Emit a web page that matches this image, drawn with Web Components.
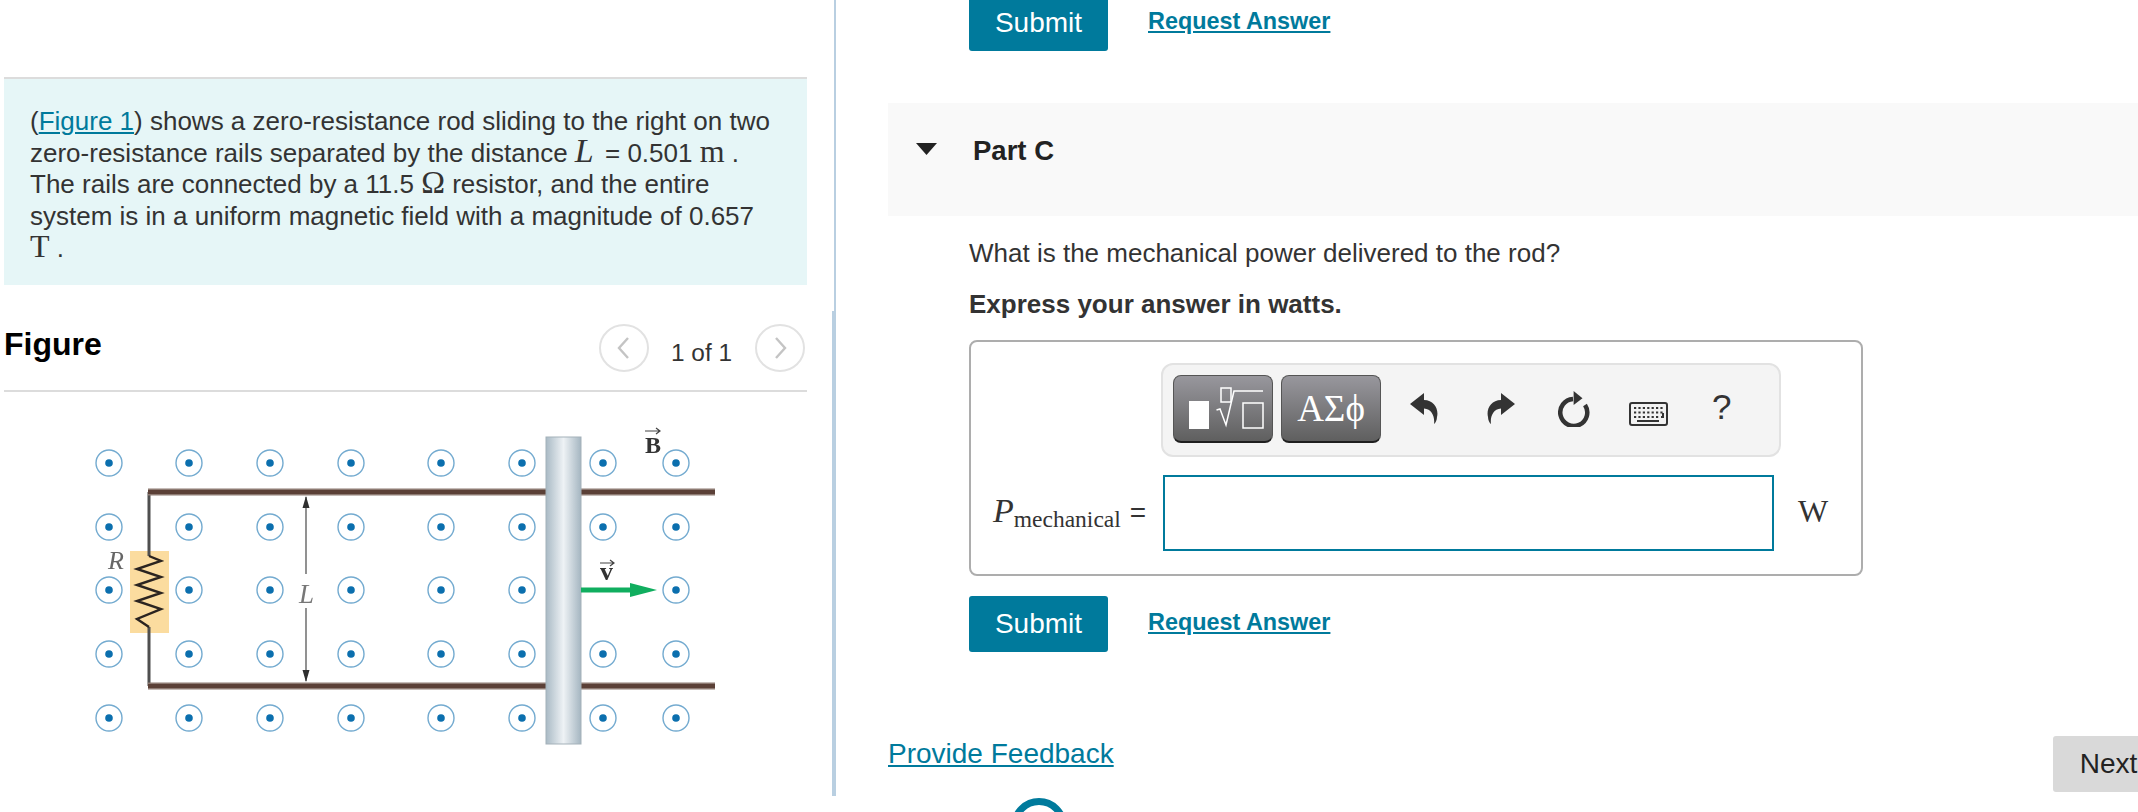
<!DOCTYPE html>
<html>
<head>
<meta charset="utf-8">
<title>Part C</title>
<style>
  html, body { margin: 0; padding: 0; background: #fff; overflow: hidden; }
  body { width: 2138px; height: 812px; font-family: "Liberation Sans", Arial, sans-serif; color: #333; }
</style>
</head>
<body>
<item-page>
  <problem-intro slot="left"></problem-intro>
  <figure-panel slot="left"></figure-panel>

  <answer-actions slot="right" clipped></answer-actions>
  <part-header slot="right" label="Part C"></part-header>
  <part-prompt slot="right">
    What is the mechanical power delivered to the rod?
    <b slot="hint">Express your answer in watts.</b>
  </part-prompt>
  <answer-box slot="right"></answer-box>
  <answer-actions slot="right"></answer-actions>
  <feedback-bar slot="right"></feedback-bar>
</item-page>

<script>
class ItemPage extends HTMLElement {
    constructor() {
        super();
        this.attachShadow({ mode: 'open' });
    }

    connectedCallback() {
        this.shadowRoot.innerHTML = `
            <style>
                :host {
                    display: flex;
                    position: relative;
                    width: 2138px;
                    height: 812px;
                    overflow: hidden;
                }
                .left {
                    width: 803px;
                    flex: none;
                    margin-left: 4px;
                    margin-right: 25px;
                    padding-top: 77px;
                }
                /* thin above the figure header, twice as wide below it */
                .rule {
                    width: 4px;
                    height: 796px;
                    flex: none;
                    background:
                        linear-gradient(#b9cfe1, #b9cfe1) right top / 2px 100% no-repeat,
                        linear-gradient(#b9cfe1, #b9cfe1) left 311px / 2px 100% no-repeat;
                }
                .right {
                    width: 1250px;
                    flex: none;
                    margin-left: 52px;
                    display: flex;
                    flex-direction: column;
                }
                .help {
                    position: absolute;
                    left: 1011px;
                    top: 798px;
                    width: 42px;
                    height: 42px;
                    border: 7px solid #007a9c;
                    border-radius: 50%;
                    background: #fff;
                }
            </style>
            <div class="left"><slot name="left"></slot></div>
            <div class="rule"></div>
            <div class="right"><slot name="right"></slot></div>
            <div class="help"></div>
        `;
    }
}

class ProblemIntro extends HTMLElement {
    constructor() {
        super();
        this.attachShadow({ mode: 'open' });
    }

    connectedCallback() {
        this.shadowRoot.innerHTML = `
            <style>
                :host {
                    display: block;
                    box-sizing: border-box;
                    height: 208px;
                    padding: 27px 0 0 26px;
                    background: #e6f6f7;
                    border-top: 2px solid #dcdcdc;
                    font-size: 26px;
                    line-height: 31.7px;
                    color: #333;
                    white-space: nowrap;
                }
                a { color: #007a9c; text-decoration: underline; }
                .m { font-family: "Liberation Serif", serif; font-size: 32px; line-height: 20px; }
                .i { font-style: italic; font-size: 34px; margin-right: 4px; }
            </style>
            (<a>Figure 1</a>) shows a zero-resistance rod sliding to the right on two<br>
            zero-resistance rails separated by the distance <span class="m i">L</span> = 0.501 <span class="m">m</span> .<br>
            The rails are connected by a 11.5 <span class="m">Ω</span> resistor, and the entire<br>
            system is in a uniform magnetic field with a magnitude of 0.657<br>
            <span class="m">T</span> .
        `;
    }
}

class FigurePanel extends HTMLElement {
    constructor() {
        super();
        this.attachShadow({ mode: 'open' });
    }

    connectedCallback() {
        // field markers, the spot behind the velocity arrow stays empty
        const cols = [109, 189, 270, 351, 441, 522, 603, 676];
        const rows = [463, 527, 590, 654, 718];
        let dots = '';
        for (const y of rows) {
            for (const x of cols) {
                if (x === 603 && y === 590) continue;
                dots += `<circle cx="${x}" cy="${y}" r="13" fill="#fff" stroke="#74abd0" stroke-width="1.4"/>`;
                dots += `<circle cx="${x}" cy="${y}" r="3.8" fill="#0b6fae"/>`;
            }
        }

        this.shadowRoot.innerHTML = `
            <style>
                :host { display: block; margin-top: 39px; }
                header {
                    display: flex;
                    height: 66px;
                    border-bottom: 2px solid #dcdcdc;
                }
                h2 {
                    margin: 1px 0 0 0;
                    font-size: 32px;
                    line-height: 38px;
                    font-weight: bold;
                    color: #000;
                    flex: 1;
                }
                .pager {
                    display: flex;
                    align-items: flex-start;
                    margin-right: 2px;
                }
                .pager span {
                    font-size: 24.4px;
                    line-height: 30px;
                    margin: 14px 23px 0 22px;
                    color: #333;
                }
                .pager svg { display: block; }
                .fig { display: block; filter: blur(0.55px); }
                text { font-family: "Liberation Serif", serif; }
            </style>
            <header>
                <h2>Figure</h2>
                <div class="pager">
                    <svg width="50" height="48" viewBox="0 0 50 48">
                        <ellipse cx="25" cy="24" rx="24" ry="23" fill="#fff" stroke="#e2e2e2" stroke-width="2"/>
                        <path d="M29 14 L20 24 L29 34" fill="none" stroke="#c4c4c4" stroke-width="2.4"/>
                    </svg>
                    <span>1 of 1</span>
                    <svg width="50" height="48" viewBox="0 0 50 48">
                        <ellipse cx="25" cy="24" rx="24" ry="23" fill="#fff" stroke="#e2e2e2" stroke-width="2"/>
                        <path d="M21 14 L30 24 L21 34" fill="none" stroke="#c4c4c4" stroke-width="2.4"/>
                    </svg>
                </div>
            </header>
            <svg class="fig" width="803" height="360" viewBox="4 392 803 360">
                <defs>
                    <linearGradient id="rod" x1="0" x2="1" y1="0" y2="0">
                        <stop offset="0" stop-color="#a9bac5"/>
                        <stop offset="0.5" stop-color="#eef2f5"/>
                        <stop offset="1" stop-color="#a5b6c1"/>
                    </linearGradient>
                </defs>
                ${dots}
                <rect x="130" y="551" width="39" height="82" fill="#fbdc9f"/>
                <path d="M149 492 V556 M149 627 V686" fill="none" stroke="#4f4f4f" stroke-width="3"/>
                <path d="M149 556 L161 561 L137 569 L161 577 L137 585 L161 593 L137 601 L161 609 L137 619 L149 627" fill="none" stroke="#2b2420" stroke-width="2.4"/>
                <rect x="148" y="488.5" width="567" height="7" fill="#8d7a72"/>
                <rect x="148" y="490" width="567" height="4" fill="#5b4037"/>
                <rect x="148" y="682.5" width="567" height="7" fill="#8d7a72"/>
                <rect x="148" y="684" width="567" height="4" fill="#5b4037"/>
                <path d="M306 497 V574 M306 608 V681" fill="none" stroke="#777" stroke-width="1.6"/>
                <path d="M306 496 L302.5 508 H309.5 Z M306 682 L302.5 670 H309.5 Z" fill="#2f2f2f"/>
                <text x="299" y="603" font-size="27" font-style="italic" fill="#777">L</text>
                <text x="108" y="569" font-size="26" font-style="italic" fill="#666">R</text>
                <rect x="546" y="437" width="35" height="307" fill="url(#rod)" stroke="#a4b1b9" stroke-width="1"/>
                <path d="M581 590 H632" stroke="#10ae5f" stroke-width="5"/>
                <path d="M630 583 L657 590 L630 597 Z" fill="#10ae5f"/>
                <text x="600" y="580" font-size="26" font-weight="bold" fill="#333">v</text>
                <path d="M600 563 H614 M610 560 L614 563 L610 566" fill="none" stroke="#444" stroke-width="1.2"/>
                <text x="645" y="453" font-size="24" font-weight="bold" fill="#333">B</text>
                <path d="M645 431 H660 M656 428 L660 431 L656 434" fill="none" stroke="#444" stroke-width="1.2"/>
            </svg>
        `;
    }
}

class AnswerActions extends HTMLElement {
    constructor() {
        super();
        this.attachShadow({ mode: 'open' });
    }

    connectedCallback() {
        this.shadowRoot.innerHTML = `
            <style>
                :host {
                    display: flex;
                    align-items: center;
                    height: 56px;
                    padding-left: 81px;
                }
                :host([clipped]) { margin-top: -5px; }
                button {
                    width: 139px;
                    height: 56px;
                    border: 0;
                    border-radius: 3px;
                    background: #007a9c;
                    color: #fff;
                    font: 28px "Liberation Sans", Arial, sans-serif;
                    padding: 0;
                }
                a {
                    margin: 0 0 3px 40px;
                    font-size: 23.4px;
                    font-weight: bold;
                    color: #007a9c;
                    text-decoration: underline;
                }
            </style>
            <button>Submit</button>
            <a>Request Answer</a>
        `;
    }
}

class PartHeader extends HTMLElement {
    constructor() {
        super();
        this.attachShadow({ mode: 'open' });
    }

    connectedCallback() {
        const label = this.getAttribute('label') || 'Part';

        this.shadowRoot.innerHTML = `
            <style>
                :host {
                    display: flex;
                    box-sizing: border-box;
                    height: 113px;
                    margin-top: 52px;
                    padding: 32px 0 0 28px;
                    background: #f9f9f9;
                    margin-right: -52px;
                }
                svg { display: block; margin: 8px 36px 0 0; }
                h3 {
                    margin: 0;
                    font-size: 27.5px;
                    line-height: 32px;
                    font-weight: bold;
                    color: #222;
                }
            </style>
            <svg width="21" height="12" viewBox="0 0 21 12"><path d="M0 0 H21 L10.5 12 Z" fill="#222"/></svg>
            <h3>${label}</h3>
        `;
    }
}

class PartPrompt extends HTMLElement {
    constructor() {
        super();
        this.attachShadow({ mode: 'open' });
    }

    connectedCallback() {
        this.shadowRoot.innerHTML = `
            <style>
                :host {
                    display: block;
                    margin-top: 21px;
                    padding-left: 81px;
                    font-size: 26px;
                    line-height: 32px;
                    color: #333;
                }
                .hint { margin-top: 19px; font-weight: bold; }
            </style>
            <div><slot></slot></div>
            <div class="hint"><slot name="hint"></slot></div>
        `;
    }
}

class MathToolbar extends HTMLElement {
    constructor() {
        super();
        this.attachShadow({ mode: 'open' });
    }

    connectedCallback() {
        this.shadowRoot.innerHTML = `
            <style>
                :host {
                    display: flex;
                    align-items: flex-start;
                    box-sizing: border-box;
                    width: 620px;
                    height: 94px;
                    padding: 10px 0 0 10px;
                    background: #f4f4f4;
                    border: 2px solid #e2e2e2;
                    border-radius: 12px;
                }
                .tool {
                    box-sizing: border-box;
                    width: 100px;
                    height: 68px;
                    margin-right: 8px;
                    display: flex;
                    align-items: center;
                    justify-content: center;
                    border: 1px solid #555;
                    border-bottom: 2px solid #1f1f1f;
                    border-radius: 8px;
                    background: linear-gradient(#98979d, #5f5f5f);
                    color: #fff;
                    font: 37px "Liberation Serif", serif;
                }
                svg { display: block; flex: none; }
                .undo { margin: 18px 0 0 21px; }
                .redo { margin: 18px 0 0 49px; }
                .reset { margin: 16px 0 0 43px; }
                .keys { margin: 27px 0 0 39px; }
                .help {
                    margin: 13px 0 0 44px;
                    font: 35px/37px "Liberation Sans", Arial, sans-serif;
                    color: #333;
                }
            </style>
            <div class="tool">
                <svg width="98" height="65" viewBox="1 1 98 65">
                    <rect x="16" y="26" width="20" height="28" fill="#fff"/>
                    <rect x="48" y="13" width="10" height="14" fill="none" stroke="#fff" stroke-width="1.5"/>
                    <path d="M43.5 35 L47 34 L53 50 L61 16 H90" fill="none" stroke="#fff" stroke-width="1.5"/>
                    <rect x="70" y="28" width="20" height="25" fill="none" stroke="#fff" stroke-width="1.5"/>
                </svg>
            </div>
            <div class="tool">ΑΣϕ</div>
            <svg class="undo" width="28" height="31" viewBox="0 0 28 31">
                <path d="M0 11 L14 0 V7 C24 7 29 16 27 24 C27 27 25.5 30 24 31 C25 24 22 16 14 15.5 V22 Z" fill="#333"/>
            </svg>
            <svg class="redo" width="28" height="31" viewBox="0 0 28 31">
                <path d="M28 11 L14 0 V7 C4 7 -1 16 1 24 C1 27 2.5 30 4 31 C3 24 6 16 14 15.5 V22 Z" fill="#333"/>
            </svg>
            <svg class="reset" width="32" height="36" viewBox="0 0 32 36">
                <path d="M15 8 A13.5 13.5 0 1 0 27 14" fill="none" stroke="#333" stroke-width="4.5"/>
                <path d="M15.6 0 L24.5 7.3 L15.6 14 Z" fill="#333"/>
            </svg>
            <svg class="keys" width="39" height="24" viewBox="0 0 39 24">
                <rect x="1" y="1" width="37" height="22" rx="2" fill="#f2f2f2" stroke="#333" stroke-width="2"/>
                <path d="M5 6 H34 M5 10.5 H34 M5 15 H31" fill="none" stroke="#333" stroke-width="2" stroke-dasharray="2.2 2.2"/>
                <path d="M32 15 H34 V11 M8 19 H30" fill="none" stroke="#333" stroke-width="2"/>
            </svg>
            <div class="help">?</div>
        `;
    }
}

class AnswerBox extends HTMLElement {
    constructor() {
        super();
        this.attachShadow({ mode: 'open' });
    }

    connectedCallback() {
        this.shadowRoot.innerHTML = `
            <style>
                :host {
                    display: block;
                    box-sizing: border-box;
                    width: 894px;
                    height: 236px;
                    margin: 20px 0 20px 81px;
                    padding: 21px 0 0 22px;
                    border: 2px solid #adadad;
                    border-radius: 8px;
                }
                math-toolbar { margin-left: 168px; }
                .row { display: flex; margin-top: 18px; font-family: "Liberation Serif", serif; color: #333; }
                .label {
                    width: 170px;
                    flex: none;
                    padding-top: 16px;
                    white-space: nowrap;
                }
                .p { font-style: italic; font-size: 34px; line-height: 40px; }
                .sub { font-size: 23.5px; position: relative; top: 5px; }
                .eq { font-size: 28px; margin-left: 9px; font-family: "Liberation Sans", sans-serif; }
                .field {
                    box-sizing: border-box;
                    width: 611px;
                    height: 76px;
                    border: 2px solid #007a9c;
                    background: #fff;
                }
                .unit { margin: 16px 0 0 24px; font-size: 32px; line-height: 40px; }
            </style>
            <math-toolbar></math-toolbar>
            <div class="row">
                <div class="label"><span class="p">P</span><span class="sub">mechanical</span><span class="eq">=</span></div>
                <div class="field"></div>
                <div class="unit">W</div>
            </div>
        `;
    }
}

class FeedbackBar extends HTMLElement {
    constructor() {
        super();
        this.attachShadow({ mode: 'open' });
    }

    connectedCallback() {
        this.shadowRoot.innerHTML = `
            <style>
                :host {
                    display: flex;
                    justify-content: space-between;
                    align-items: flex-start;
                    margin: 84px -26px 0 0;
                    font-size: 28px;
                    line-height: 32px;
                }
                a {
                    margin-top: 2px;
                    color: #007a9c;
                    text-decoration: underline;
                }
                button {
                    width: 111px;
                    height: 56px;
                    border: 0;
                    border-radius: 3px;
                    background: #d9d9d9;
                    color: #222;
                    font: 28px "Liberation Sans", Arial, sans-serif;
                    padding: 0;
                }
            </style>
            <a>Provide Feedback</a>
            <button>Next</button>
        `;
    }
}

customElements.define('item-page', ItemPage);
customElements.define('problem-intro', ProblemIntro);
customElements.define('figure-panel', FigurePanel);
customElements.define('answer-actions', AnswerActions);
customElements.define('part-header', PartHeader);
customElements.define('part-prompt', PartPrompt);
customElements.define('math-toolbar', MathToolbar);
customElements.define('answer-box', AnswerBox);
customElements.define('feedback-bar', FeedbackBar);
</script>
</body>
</html>
